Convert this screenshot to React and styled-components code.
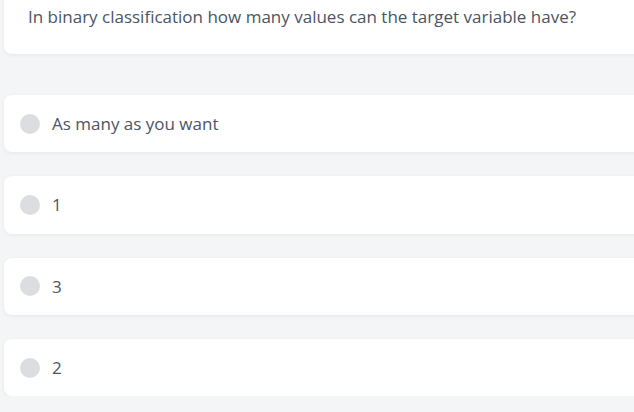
import React from "react";
import styled, { createGlobalStyle } from "styled-components";

const Global = createGlobalStyle`
  html, body { margin: 0; padding: 0; background: #f4f5f7; overflow: hidden; }
  body { font-family: "Open Sans", "Noto Sans", sans-serif; }
`;

const Page = styled.div`
  width: 700px;
  padding-left: 4px;
  display: flex;
  flex-direction: column;
`;

const QuestionCard = styled.div`
  background: #fff;
  border-radius: 8px;
  box-shadow: 0 1px 4px rgba(0, 0, 0, 0.06);
  margin-top: -20px;
  padding: 25px 24px 25px 24px;
  font-size: 17px;
  line-height: 24px;
  color: #4b5563;
`;

const Options = styled.div`
  margin-top: 41px;
  display: flex;
  flex-direction: column;
  gap: 24px;
`;

const Option = styled.label`
  background: #fff;
  border-radius: 8px;
  box-shadow: 0 1px 4px rgba(0, 0, 0, 0.06);
  height: 57.33px;
  box-sizing: border-box;
  padding: 0 16px;
  display: flex;
  align-items: center;
  gap: 12px;
  font-size: 17px;
  color: #4b5563;
  cursor: pointer;
`;

const Radio = styled.span`
  width: 20px;
  height: 20px;
  border-radius: 50%;
  background: #dcdde0;
  flex: none;
`;

const options = ["As many as you want", "1", "3", "2"];

export default function App() {
  return (
    <>
      <Global />
      <Page>
        <QuestionCard>
          In binary classification how many values can the target variable have?
        </QuestionCard>
        <Options>
          {options.map((o) => (
            <Option key={o}>
              <Radio />
              {o}
            </Option>
          ))}
        </Options>
      </Page>
    </>
  );
}
